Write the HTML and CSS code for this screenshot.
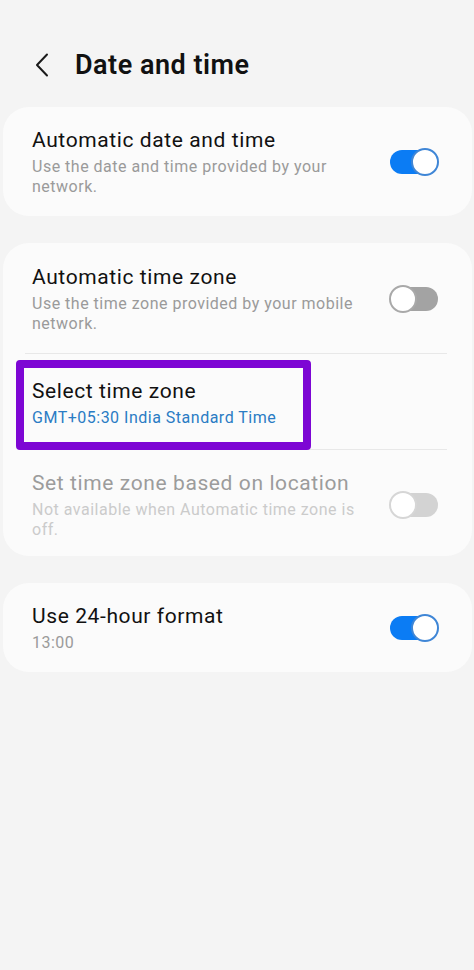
FILE: index.html
```html
<!DOCTYPE html>
<html lang="en">
<head>
    <meta charset="utf-8" />
    <title>Date and time</title>
    <link rel="stylesheet" href="styles.css">
</head>
<body>
    <div class="page">
        <div class="top-bar">
            <span class="back">
                <svg width="14" height="24" viewBox="0 0 14 24">
                    <path d="M12 1.5 L2 12 L12 22.5" fill="none" stroke="#1a1a1a" stroke-width="2" stroke-linecap="round" stroke-linejoin="round" />
                </svg>
            </span>
            <h1 class="page-title">Date and time</h1>
        </div>

        <!-- automatic date -->
        <div class="card">
            <div class="row row-first">
                <div class="row-text">
                    <div class="row-title">Automatic date and time</div>
                    <div class="row-sub">Use the date and time provided by your network.</div>
                </div>
                <span class="switch on"><span class="knob"></span></span>
            </div>
        </div>

        <!-- time zone -->
        <div class="card">
            <div class="row">
                <div class="row-text">
                    <div class="row-title">Automatic time zone</div>
                    <div class="row-sub">Use the time zone provided by your mobile network.</div>
                </div>
                <span class="switch off"><span class="knob"></span></span>
            </div>
            <div class="divider"></div>
            <div class="row row-select">
                <div class="row-text">
                    <div class="row-title">Select time zone</div>
                    <div class="row-sub blue">GMT+05:30 India Standard Time</div>
                </div>
                <span class="mark"></span>
            </div>
            <div class="divider"></div>
            <div class="row row-disabled">
                <div class="row-text">
                    <div class="row-title">Set time zone based on location</div>
                    <div class="row-sub">Not available when Automatic time zone is off.</div>
                </div>
                <span class="switch off"><span class="knob"></span></span>
            </div>
        </div>

        <!-- 24 hour -->
        <div class="card">
            <div class="row row-last">
                <div class="row-text">
                    <div class="row-title">Use 24-hour format</div>
                    <div class="row-sub">13:00</div>
                </div>
                <span class="switch on"><span class="knob"></span></span>
            </div>
        </div>
    </div>
</body>
</html>
```

FILE: styles.css
```css
body {
    margin: 0;
    font-family: Roboto, "Liberation Sans", Arial, sans-serif;
    background-color: #f4f4f4;
    color: #111;
}

.page {
    padding: 0 2px 0 3px;
    height: 970px;
    box-sizing: border-box;
}

.top-bar {
    display: flex;
    align-items: center;
    height: 107px;
    padding-left: 32px;
    padding-top: 22px;
    box-sizing: border-box;
}

.back {
    display: flex;
    width: 14px;
    height: 24px;
    margin-right: 26px;
}

.page-title {
    margin: 0;
    font-size: 27px;
    font-weight: 600;
    color: #111;
    letter-spacing: 0.5px;
}

.card {
    background-color: #fbfbfb;
    border-radius: 26px;
    margin-bottom: 27px;
}

.row {
    position: relative;
    display: flex;
    align-items: center;
    padding: 21px 34px 19px 29px;
}

.row-first {
    padding-top: 20px;
}

.row-last {
    padding-top: 20px;
}

.row-text {
    flex: 1;
    padding-right: 24px;
}

.row-title {
    font-size: 21px;
    line-height: 26px;
    color: #111;
    letter-spacing: 0.6px;
}

.row-sub {
    margin-top: 4px;
    font-size: 16px;
    line-height: 20px;
    color: #9a9a9a;
    letter-spacing: 0.5px;
}

.row-sub.blue {
    color: #2a7cc4;
}

.row-select {
    padding-top: 24px;
    padding-bottom: 21px;
}

.row-disabled .row-title {
    color: #9c9c9c;
}

.row-disabled .row-sub {
    color: #cbcbcb;
}

.row-disabled {
    padding-top: 20px;
    padding-bottom: 16px;
}

.divider {
    height: 1px;
    margin: 0 25px 0 22px;
    background-color: #e8e8e8;
}

.mark {
    position: absolute;
    left: 13px;
    top: 6px;
    width: 295px;
    height: 90px;
    border: 8px solid #7d06d4;
    border-radius: 4px;
    box-sizing: border-box;
}

.switch {
    position: relative;
    display: block;
    width: 48px;
    height: 24px;
    border-radius: 12px;
    flex-shrink: 0;
}

.switch .knob {
    position: absolute;
    top: -2px;
    width: 28px;
    height: 28px;
    border-radius: 50%;
    background-color: #fff;
    box-sizing: border-box;
    border: 2px solid #3f86d6;
}

.switch.on {
    background-color: #0b7cf4;
}

.switch.on .knob {
    right: -1px;
}

.switch.off {
    background-color: #a3a3a3;
}

.switch.off .knob {
    left: -1px;
    border-color: #a9a9a9;
}

.row-disabled .switch.off {
    background-color: #d3d3d3;
}

.row-disabled .switch.off .knob {
    border-color: #d6d6d6;
}
```
